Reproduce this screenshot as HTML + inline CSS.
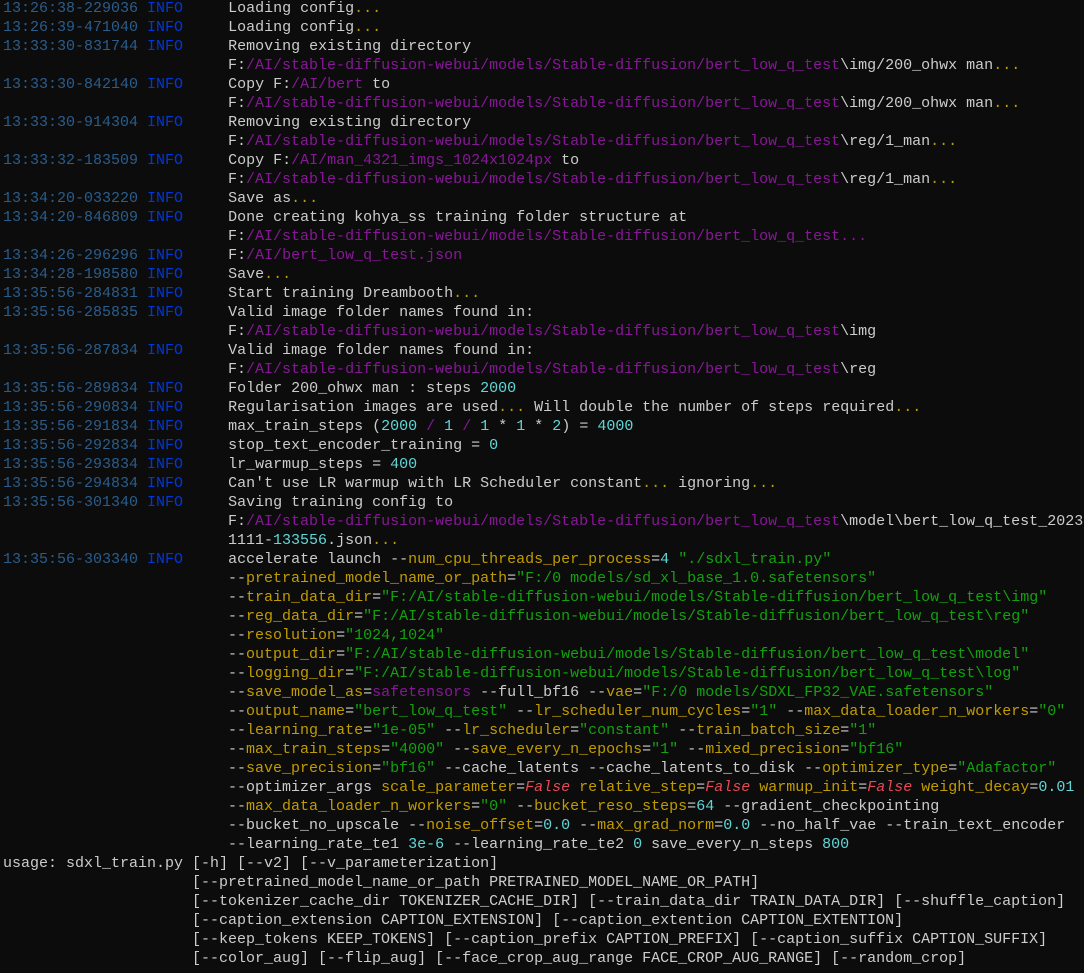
<html><head><style>
body{margin:0;background:#0c0c0c;width:1084px;height:973px;overflow:hidden}
pre{margin:0;padding:0 0 0 3px;position:relative;top:-1px;font-family:"Liberation Mono",monospace;font-size:15px;line-height:19px;color:#cccccc;white-space:pre}
.t{color:#2a5d8c}.i{color:#0037da}.p{color:#881798}.y{color:#c19c00}.g{color:#13a10e}.c{color:#61d6d6}.r{color:#e74856;font-style:italic}
</style></head><body><pre><span class="t">13:26:38-229036</span> <span class="i">INFO</span>     Loading config<span class="y">...</span>
<span class="t">13:26:39-471040</span> <span class="i">INFO</span>     Loading config<span class="y">...</span>
<span class="t">13:33:30-831744</span> <span class="i">INFO</span>     Removing existing directory
                         F:<span class="p">/AI/stable-diffusion-webui/models/Stable-diffusion/bert_low_q_test</span>\img/200_ohwx man<span class="y">...</span>
<span class="t">13:33:30-842140</span> <span class="i">INFO</span>     Copy F:<span class="p">/AI/bert</span> to
                         F:<span class="p">/AI/stable-diffusion-webui/models/Stable-diffusion/bert_low_q_test</span>\img/200_ohwx man<span class="y">...</span>
<span class="t">13:33:30-914304</span> <span class="i">INFO</span>     Removing existing directory
                         F:<span class="p">/AI/stable-diffusion-webui/models/Stable-diffusion/bert_low_q_test</span>\reg/1_man<span class="y">...</span>
<span class="t">13:33:32-183509</span> <span class="i">INFO</span>     Copy F:<span class="p">/AI/man_4321_imgs_1024x1024px</span> to
                         F:<span class="p">/AI/stable-diffusion-webui/models/Stable-diffusion/bert_low_q_test</span>\reg/1_man<span class="y">...</span>
<span class="t">13:34:20-033220</span> <span class="i">INFO</span>     Save as<span class="y">...</span>
<span class="t">13:34:20-846809</span> <span class="i">INFO</span>     Done creating kohya_ss training folder structure at
                         F:<span class="p">/AI/stable-diffusion-webui/models/Stable-diffusion/bert_low_q_test...</span>
<span class="t">13:34:26-296296</span> <span class="i">INFO</span>     F:<span class="p">/AI/bert_low_q_test.json</span>
<span class="t">13:34:28-198580</span> <span class="i">INFO</span>     Save<span class="y">...</span>
<span class="t">13:35:56-284831</span> <span class="i">INFO</span>     Start training Dreambooth<span class="y">...</span>
<span class="t">13:35:56-285835</span> <span class="i">INFO</span>     Valid image folder names found in:
                         F:<span class="p">/AI/stable-diffusion-webui/models/Stable-diffusion/bert_low_q_test</span>\img
<span class="t">13:35:56-287834</span> <span class="i">INFO</span>     Valid image folder names found in:
                         F:<span class="p">/AI/stable-diffusion-webui/models/Stable-diffusion/bert_low_q_test</span>\reg
<span class="t">13:35:56-289834</span> <span class="i">INFO</span>     Folder 200_ohwx man : steps <span class="c">2000</span>
<span class="t">13:35:56-290834</span> <span class="i">INFO</span>     Regularisation images are used<span class="y">...</span> Will double the number of steps required<span class="y">...</span>
<span class="t">13:35:56-291834</span> <span class="i">INFO</span>     max_train_steps (<span class="c">2000</span> <span class="p">/</span> <span class="c">1</span> <span class="p">/</span> <span class="c">1</span> * <span class="c">1</span> * <span class="c">2</span>) = <span class="c">4000</span>
<span class="t">13:35:56-292834</span> <span class="i">INFO</span>     stop_text_encoder_training = <span class="c">0</span>
<span class="t">13:35:56-293834</span> <span class="i">INFO</span>     lr_warmup_steps = <span class="c">400</span>
<span class="t">13:35:56-294834</span> <span class="i">INFO</span>     Can't use LR warmup with LR Scheduler constant<span class="y">...</span> ignoring<span class="y">...</span>
<span class="t">13:35:56-301340</span> <span class="i">INFO</span>     Saving training config to
                         F:<span class="p">/AI/stable-diffusion-webui/models/Stable-diffusion/bert_low_q_test</span>\model\bert_low_q_test_2023
                         1111-<span class="c">133556</span>.json<span class="y">...</span>
<span class="t">13:35:56-303340</span> <span class="i">INFO</span>     accelerate launch --<span class="y">num_cpu_threads_per_process</span>=<span class="c">4</span> <span class="g">"./sdxl_train.py"</span>
                         --<span class="y">pretrained_model_name_or_path</span>=<span class="g">"F:/0 models/sd_xl_base_1.0.safetensors"</span>
                         --<span class="y">train_data_dir</span>=<span class="g">"F:/AI/stable-diffusion-webui/models/Stable-diffusion/bert_low_q_test\img"</span>
                         --<span class="y">reg_data_dir</span>=<span class="g">"F:/AI/stable-diffusion-webui/models/Stable-diffusion/bert_low_q_test\reg"</span>
                         --<span class="y">resolution</span>=<span class="g">"1024,1024"</span>
                         --<span class="y">output_dir</span>=<span class="g">"F:/AI/stable-diffusion-webui/models/Stable-diffusion/bert_low_q_test\model"</span>
                         --<span class="y">logging_dir</span>=<span class="g">"F:/AI/stable-diffusion-webui/models/Stable-diffusion/bert_low_q_test\log"</span>
                         --<span class="y">save_model_as</span>=<span class="p">safetensors</span> --full_bf16 --<span class="y">vae</span>=<span class="g">"F:/0 models/SDXL_FP32_VAE.safetensors"</span>
                         --<span class="y">output_name</span>=<span class="g">"bert_low_q_test"</span> --<span class="y">lr_scheduler_num_cycles</span>=<span class="g">"1"</span> --<span class="y">max_data_loader_n_workers</span>=<span class="g">"0"</span>
                         --<span class="y">learning_rate</span>=<span class="g">"1e-05"</span> --<span class="y">lr_scheduler</span>=<span class="g">"constant"</span> --<span class="y">train_batch_size</span>=<span class="g">"1"</span>
                         --<span class="y">max_train_steps</span>=<span class="g">"4000"</span> --<span class="y">save_every_n_epochs</span>=<span class="g">"1"</span> --<span class="y">mixed_precision</span>=<span class="g">"bf16"</span>
                         --<span class="y">save_precision</span>=<span class="g">"bf16"</span> --cache_latents --cache_latents_to_disk --<span class="y">optimizer_type</span>=<span class="g">"Adafactor"</span>
                         --optimizer_args <span class="y">scale_parameter</span>=<span class="r">False</span> <span class="y">relative_step</span>=<span class="r">False</span> <span class="y">warmup_init</span>=<span class="r">False</span> <span class="y">weight_decay</span>=<span class="c">0.01</span>
                         --<span class="y">max_data_loader_n_workers</span>=<span class="g">"0"</span> --<span class="y">bucket_reso_steps</span>=<span class="c">64</span> --gradient_checkpointing
                         --bucket_no_upscale --<span class="y">noise_offset</span>=<span class="c">0.0</span> --<span class="y">max_grad_norm</span>=<span class="c">0.0</span> --no_half_vae --train_text_encoder
                         --learning_rate_te1 <span class="c">3e-6</span> --learning_rate_te2 <span class="c">0</span> save_every_n_steps <span class="c">800</span>
usage: sdxl_train.py [-h] [--v2] [--v_parameterization]
                     [--pretrained_model_name_or_path PRETRAINED_MODEL_NAME_OR_PATH]
                     [--tokenizer_cache_dir TOKENIZER_CACHE_DIR] [--train_data_dir TRAIN_DATA_DIR] [--shuffle_caption]
                     [--caption_extension CAPTION_EXTENSION] [--caption_extention CAPTION_EXTENTION]
                     [--keep_tokens KEEP_TOKENS] [--caption_prefix CAPTION_PREFIX] [--caption_suffix CAPTION_SUFFIX]
                     [--color_aug] [--flip_aug] [--face_crop_aug_range FACE_CROP_AUG_RANGE] [--random_crop]
</pre></body></html>
